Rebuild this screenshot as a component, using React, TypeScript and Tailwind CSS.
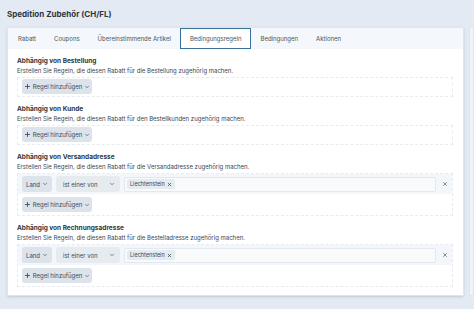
import { ChevronDown, Plus, X } from "lucide-react";

type Rule = { field: string; op: string; value: string };

type Section = {
  title: string;
  desc: string;
  rules: Rule[];
};

const tabs = [
  "Rabatt",
  "Coupons",
  "Übereinstimmende Artikel",
  "Bedingungsregeln",
  "Bedingungen",
  "Aktionen",
];

const sections: Section[] = [
  {
    title: "Abhängig von Bestellung",
    desc: "Erstellen Sie Regeln, die diesen Rabatt für die Bestellung zugehörig machen.",
    rules: [],
  },
  {
    title: "Abhängig von Kunde",
    desc: "Erstellen Sie Regeln, die diesen Rabatt für den Bestellkunden zugehörig machen.",
    rules: [],
  },
  {
    title: "Abhängig von Versandadresse",
    desc: "Erstellen Sie Regeln, die diesen Rabatt für die Versandadresse zugehörig machen.",
    rules: [{ field: "Land", op: "ist einer von", value: "Liechtenstein" }],
  },
  {
    title: "Abhängig von Rechnungsadresse",
    desc: "Erstellen Sie Regeln, die diesen Rabatt für die Bestelladresse zugehörig machen.",
    rules: [{ field: "Land", op: "ist einer von", value: "Liechtenstein" }],
  },
];

const AddButton = () => (
  <button className="flex h-[15px] w-[70px] items-center justify-center gap-[2px] rounded-[3px] bg-[#dde3ea] text-[6px] text-[#3b4a5a]">
    <Plus size={7} strokeWidth={3} />
    Regel hinzufügen
    <ChevronDown size={6} strokeWidth={2.5} />
  </button>
);

const RuleRow = ({ rule }: { rule: Rule }) => (
  <div className="flex h-[20px] items-center gap-[4px] bg-[#f3f6fa] pl-[4px] pr-[3px]">
    <div className="flex h-[16px] w-[30px] items-center justify-center gap-[2px] rounded-[3px] bg-[#dde3ea] text-[6px] text-[#3b4a5a]">
      {rule.field}
      <ChevronDown size={6} strokeWidth={2.5} />
    </div>
    <div className="flex h-[16px] w-[64px] items-center justify-between rounded-[3px] bg-[#e6ebf0] pl-[7px] pr-[5px] text-[6px] text-[#3b4a5a]">
      {rule.op}
      <ChevronDown size={6} strokeWidth={2.5} />
    </div>
    <div className="flex h-[15px] flex-1 items-center rounded-[2px] border border-[#e3e8ee] bg-[#f8fafc] pl-[2px]">
      <span className="flex h-[10px] items-center gap-[2px] rounded-[2px] bg-[#e6ebf0] px-[3px] text-[5.5px] text-[#3b4a5a]">
        {rule.value}
        <X size={5} strokeWidth={3.5} />
      </span>
    </div>
    <X size={6} strokeWidth={3} className="ml-[2px] mr-[1px] text-[#666]" />
  </div>
);

export default function App() {
  return (
    <div
      className="h-[309px] w-[474px] overflow-hidden bg-[#e3eaf3] text-[#2b2b2b]"
      style={{ fontFamily: "Inter, 'Liberation Sans', sans-serif" }}
    >
      <div className="flex h-[27px] items-center pl-[7px] text-[8px] font-bold text-[#2d3640]">
        Spedition Zubehör (CH/FL)
      </div>
      <div className="flex gap-[5px]">
        <div className="ml-[7px] h-[269px] w-[457px] border border-[#dfe5ec] bg-white shadow-sm">
          <div className="flex h-[21px] items-stretch bg-[#f4f7fb] pl-[1px] text-[6px] text-[#4a5560]">
            {tabs.map((t) => (
              <div
                key={t}
                className={
                  t === "Bedingungsregeln"
                    ? "flex items-center border-[1.5px] border-[#3a6f9a] bg-white px-[9px]"
                    : "flex items-center px-[9px]"
                }
              >
                {t}
              </div>
            ))}
          </div>
          <div className="flex flex-col gap-[8px] pl-[9px] pr-[10px] pt-[8px]">
            {sections.map((s) => (
              <div key={s.title} className="flex flex-col">
                <div className="text-[6.5px] font-bold leading-[9px] text-[#2d3640]">
                  {s.title}
                </div>
                <div className="text-[6px] leading-[9px] text-[#3b4550]">{s.desc}</div>
                <div
                  className={
                    s.rules.length
                      ? "mt-[2px] flex flex-col gap-[3px] border border-dashed border-[#e8ecf0] pb-[3px]"
                      : "mt-[2px] flex flex-col gap-[3px] border border-dashed border-[#e8ecf0] pb-[2px] pt-[1px]"
                  }
                >
                  {s.rules.map((r, i) => (
                    <RuleRow key={i} rule={r} />
                  ))}
                  <div className="pl-[4px]">
                    <AddButton />
                  </div>
                </div>
              </div>
            ))}
          </div>
        </div>
        <div className="h-[269px] flex-1 border border-[#dfe5ec] bg-[#f0f4f9]" />
      </div>
    </div>
  );
}
